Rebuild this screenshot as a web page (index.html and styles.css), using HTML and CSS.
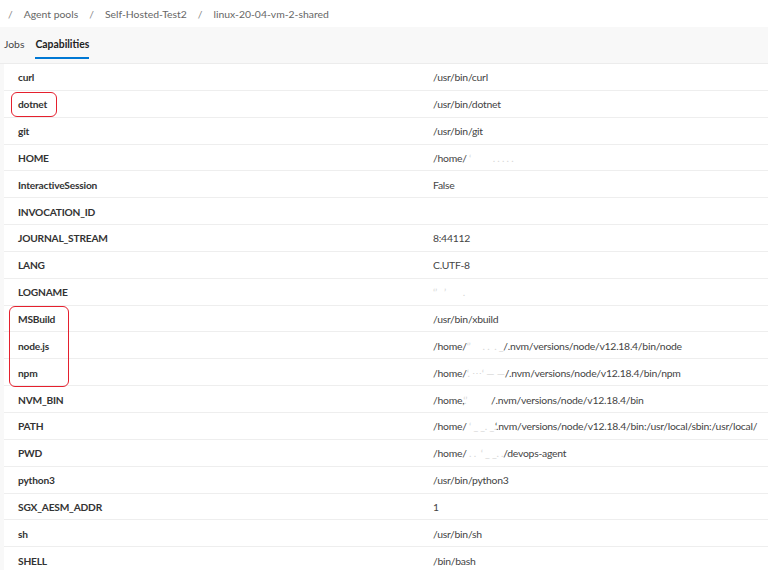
FILE: index.html
```html
<!DOCTYPE html>
<html lang="en">
<head>
    <meta charset="UTF-8">
    <title>linux-20-04-vm-2-shared - Capabilities</title>
    <link rel="stylesheet" href="styles.css">
</head>
<body>
    <!-- breadcrumb -->
    <div class="breadcrumb">
        <span class="sep">/</span>
        <span class="crumb">Agent pools</span>
        <span class="sep">/</span>
        <span class="crumb">Self-Hosted-Test2</span>
        <span class="sep">/</span>
        <span class="crumb">linux-20-04-vm-2-shared</span>
    </div>

    <!-- tabs -->
    <div class="tabs">
        <div class="tab">Jobs</div>
        <div class="tab active">Capabilities</div>
    </div>

    <!-- capabilities table -->
    <div class="content">
        <div class="table">
            <div class="row"><div class="key">curl</div><div class="value">/usr/bin/curl</div></div>
            <div class="row"><div class="key">dotnet</div><div class="value">/usr/bin/dotnet</div></div>
            <div class="row"><div class="key">git</div><div class="value">/usr/bin/git</div></div>
            <div class="row"><div class="key">HOME</div><div class="value">/home/<span class="hidden"> &#8216;&nbsp;&nbsp;&nbsp;&nbsp;&nbsp;&nbsp;&nbsp;&nbsp; . . . . .</span></div></div>
            <div class="row"><div class="key">InteractiveSession</div><div class="value">False</div></div>
            <div class="row"><div class="key">INVOCATION_ID</div><div class="value"></div></div>
            <div class="row"><div class="key">JOURNAL_STREAM</div><div class="value">8:44112</div></div>
            <div class="row"><div class="key">LANG</div><div class="value">C.UTF-8</div></div>
            <div class="row"><div class="key">LOGNAME</div><div class="value"><span class="hidden">&#8216;&#8217;&nbsp;&nbsp; &#8217;&nbsp;&nbsp;&nbsp;&nbsp;&nbsp;&nbsp; .</span></div></div>
            <div class="row"><div class="key">MSBuild</div><div class="value">/usr/bin/xbuild</div></div>
            <div class="row"><div class="key">node.js</div><div class="value">/home/<span class="hidden">&#8216;&#8217;&nbsp;&nbsp;&nbsp;&nbsp; . .&nbsp; . _</span>/.nvm/versions/node/v12.18.4/bin/node</div></div>
            <div class="row"><div class="key">npm</div><div class="value">/home/<span class="hidden">&#8216;. &#8943;&#8216; &#8212; &#8212;</span>/.nvm/versions/node/v12.18.4/bin/npm</div></div>
            <div class="row"><div class="key">NVM_BIN</div><div class="value">/home,<span class="hidden">&#8216;.&#8217;&nbsp;&nbsp;&nbsp;&nbsp;&nbsp;&nbsp;&nbsp;&nbsp;&nbsp;&nbsp;</span>/.nvm/versions/node/v12.18.4/bin</div></div>
            <div class="row"><div class="key">PATH</div><div class="value">/home/<span class="hidden"> &#8216; _ _. _.</span>&#8216;.nvm/versions/node/v12.18.4/bin:/usr/local/sbin:/usr/local/</div></div>
            <div class="row"><div class="key">PWD</div><div class="value">/home/<span class="hidden"> . .&nbsp; &#8216; _ _. .</span>/devops-agent</div></div>
            <div class="row"><div class="key">python3</div><div class="value">/usr/bin/python3</div></div>
            <div class="row"><div class="key">SGX_AESM_ADDR</div><div class="value">1</div></div>
            <div class="row"><div class="key">sh</div><div class="value">/usr/bin/sh</div></div>
            <div class="row"><div class="key">SHELL</div><div class="value">/bin/bash</div></div>

            <!-- annotations -->
            <div class="mark mark-dotnet"></div>
            <div class="mark mark-node"></div>
        </div>
    </div>
</body>
</html>
```

FILE: styles.css
```css
* {
    box-sizing: border-box;
}

body {
    margin: 0;
    font-family: 'Lato', 'Liberation Sans', sans-serif;
    font-size: 10.4px;
    color: #333;
    background: #f8f8f8;
    overflow: hidden;
}

.breadcrumb {
    height: 27px;
    display: flex;
    align-items: center;
    gap: 11px;
    padding-left: 8px;
    background: #fff;
    color: #666;
    font-size: 10.4px;
}

.breadcrumb .sep {
    color: #888;
}

.tabs {
    height: 37px;
    display: flex;
    align-items: stretch;
    gap: 11px;
    padding-left: 4px;
    background: #f8f8f8;
    border-bottom: 1px solid #ececec;
}

.tab {
    display: flex;
    align-items: center;
    padding-top: 3px;
    font-size: 10.4px;
    color: #444;
    border-bottom: 2px solid transparent;
    margin-bottom: 4px;
}

.tab.active {
    font-weight: bold;
    color: #222;
    border-bottom-color: #0078d4;
}

.content {
    padding-left: 4px;
}

.table {
    position: relative;
    background: #fff;
}

.row {
    height: 26.85px;
    padding-top: 1px;
    display: grid;
    grid-template-columns: 415px 1fr;
    align-items: center;
    border-bottom: 1px solid #eeeeee;
}

.key {
    padding-left: 14px;
    font-size: 10.2px;
    font-weight: bold;
    letter-spacing: -0.2px;
    color: #333;
}

.value {
    padding-left: 14px;
    color: #444;
    letter-spacing: -0.25px;
    white-space: nowrap;
    overflow: hidden;
}

.hidden {
    color: #d6d6d6;
}

.mark {
    position: absolute;
    border: 1.5px solid #e5202e;
    border-radius: 6px;
}

.mark-dotnet {
    left: 7px;
    top: 28px;
    width: 46px;
    height: 25px;
}

.mark-node {
    left: 5px;
    top: 242px;
    width: 60px;
    height: 81px;
}
```
